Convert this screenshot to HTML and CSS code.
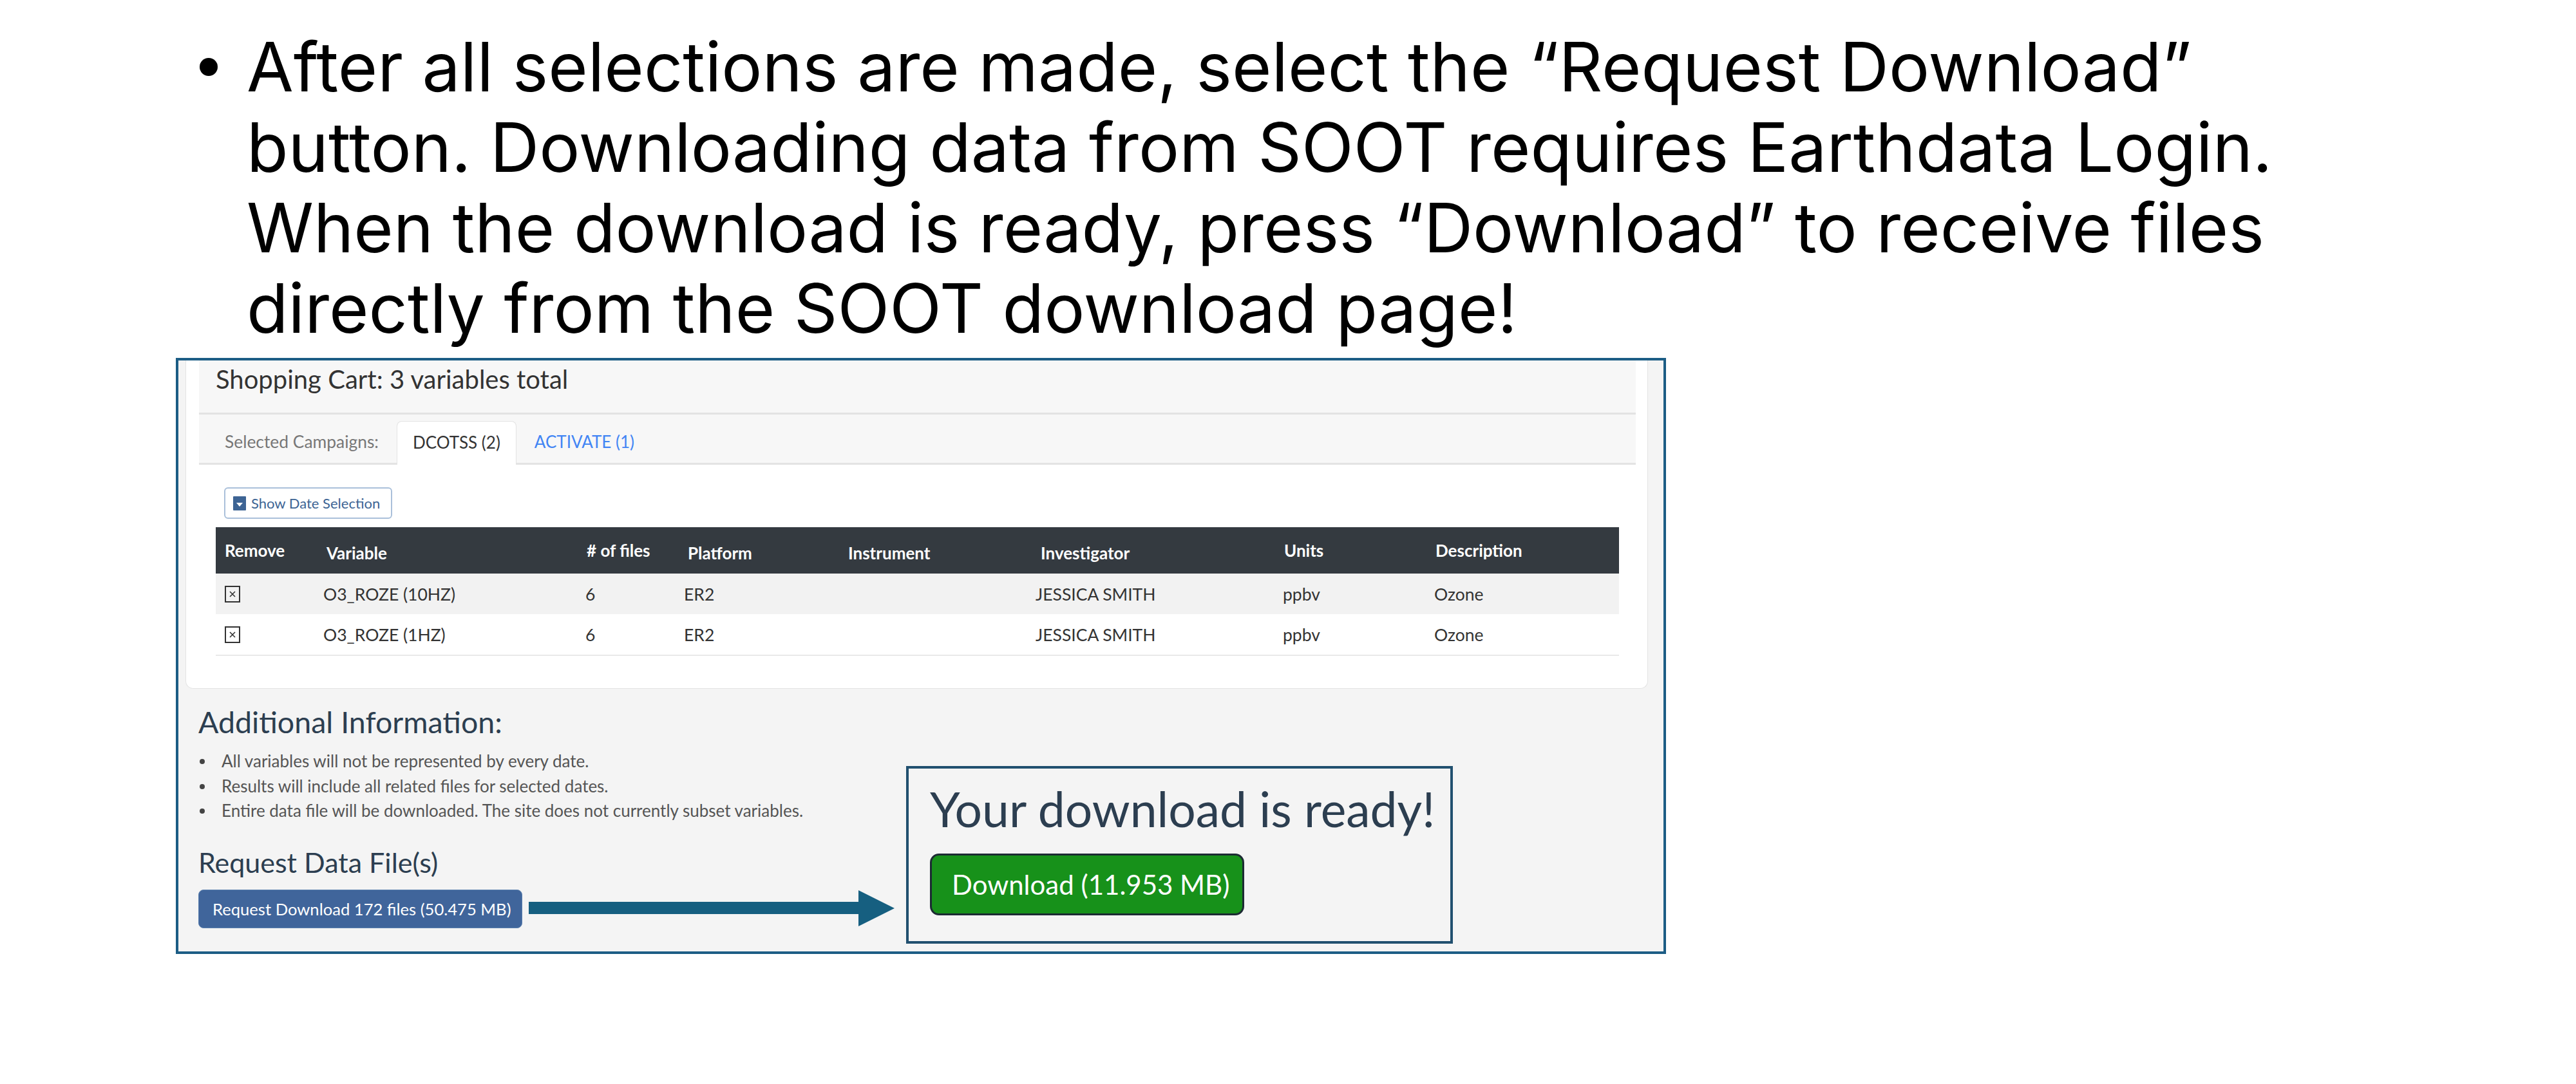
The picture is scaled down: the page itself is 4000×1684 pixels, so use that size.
FILE: index.html
```html
<!DOCTYPE html>
<html lang="en">
<head>
<meta charset="utf-8">
<title>SOOT download</title>
<link rel="stylesheet" href="styles.css">
</head>
<body>
<div class="slide">
  <div class="point">
    <span class="dot"></span>
    <p class="point-text">After all selections are made, select the “Request Download”<br>button. Downloading data from SOOT requires Earthdata Login.<br>When the download is ready, press “Download” to receive files<br>directly from the SOOT download page!</p>
  </div>

  <div class="shot">
    <div class="card">
      <div class="card-head">Shopping Cart: 3 variables total</div>
      <div class="tabs">
        <span class="tab-label">Selected Campaigns:</span>
        <span class="tab active">DCOTSS (2)</span>
        <span class="tab link">ACTIVATE (1)</span>
      </div>
      <div class="card-body">
        <button class="date-btn" type="button">
          <svg class="date-ico" width="20" height="22" viewBox="0 0 20 22"><rect x="0" y="0" width="20" height="22" rx="1" fill="#3d6494"/><polygon points="5,10 15,10 10,16" fill="#fff"/></svg>
          <span>Show Date Selection</span>
        </button>
        <table class="vars">
          <colgroup>
            <col class="c1"><col class="c2"><col class="c3"><col class="c4"><col class="c5"><col class="c6"><col class="c7"><col class="c8">
          </colgroup>
          <thead>
            <tr>
              <th>Remove</th><th class="lo">Variable</th><th># of files</th><th class="lo">Platform</th><th class="lo">Instrument</th><th class="lo">Investigator</th><th>Units</th><th>Description</th>
            </tr>
          </thead>
          <tbody>
            <tr class="odd">
              <td><svg class="rm" width="24" height="26" viewBox="0 0 24 26"><rect x="1" y="1" width="22" height="24" fill="none" stroke="#333" stroke-width="2"/><path d="M8 9 L16 17 M16 9 L8 17" stroke="#333" stroke-width="1.6"/></svg></td>
              <td>O3_ROZE (10HZ)</td><td>6</td><td>ER2</td><td></td><td>JESSICA SMITH</td><td>ppbv</td><td>Ozone</td>
            </tr>
            <tr class="even">
              <td><svg class="rm" width="24" height="26" viewBox="0 0 24 26"><rect x="1" y="1" width="22" height="24" fill="none" stroke="#333" stroke-width="2"/><path d="M8 9 L16 17 M16 9 L8 17" stroke="#333" stroke-width="1.6"/></svg></td>
              <td>O3_ROZE (1HZ)</td><td>6</td><td>ER2</td><td></td><td>JESSICA SMITH</td><td>ppbv</td><td>Ozone</td>
            </tr>
          </tbody>
        </table>
      </div>
    </div>

    <div class="lower">
      <div class="info">
        <h2 class="info-title">Additional Information:</h2>
        <ul class="info-list">
          <li>All variables will not be represented by every date.</li>
          <li>Results will include all related files for selected dates.</li>
          <li>Entire data file will be downloaded. The site does not currently subset variables.</li>
        </ul>
        <h3 class="req-title">Request Data File(s)</h3>
        <div class="req-row">
          <button class="req-btn" type="button">Request Download 172 files (50.475 MB)</button>
          <svg class="arrow" width="568" height="56" viewBox="0 0 568 56"><rect x="0" y="18" width="514" height="19" fill="#165f80"/><polygon points="512,0 568,28 512,56" fill="#165f80"/></svg>
        </div>
      </div>
      <div class="ready">
        <h1 class="ready-title">Your download is ready!</h1>
        <button class="dl-btn" type="button">Download (11.953 MB)</button>
      </div>
    </div>
  </div>
</div>
</body>
</html>
```

FILE: styles.css
```css
* { box-sizing: border-box; }
html, body { margin: 0; padding: 0; background: #ffffff; }

.slide {
  width: 4000px;
  height: 1684px;
  overflow: hidden;
  background: #ffffff;
}

/* ---------- slide bullet text ---------- */
.point {
  display: flex;
  align-items: flex-start;
  padding-top: 41px;
  padding-left: 310px;
  height: 556px;
}
.dot {
  flex: none;
  width: 28px;
  height: 28px;
  border-radius: 50%;
  background: #000;
  margin-top: 49px;
}
.point-text {
  margin: 0 0 0 45px;
  font-family: "Inter", "Noto Sans", sans-serif;
  font-size: 105.5px;
  line-height: 125px;
  color: #000;
  white-space: nowrap;
}

/* ---------- screenshot box ---------- */
.shot {
  margin-left: 273px;
  width: 2314px;
  height: 926px;
  border: 4px solid #1c5d85;
  background: #f4f4f4;
  overflow: hidden;
  font-family: "Lato", "Open Sans", sans-serif;
}

.card {
  margin-left: 11px;
  width: 2271px;
  background: #ffffff;
  border: 1px solid #e4e4e4;
  border-top: none;
  border-radius: 0 0 12px 12px;
  padding: 0 18px 50px 20px;
}

.card-head {
  height: 84px;
  background: #f7f7f7;
  border-bottom: 3px solid #e3e3e3;
  padding: 5px 0 0 26px;
  font-size: 40px;
  line-height: 48px;
  color: #333;
}

.tabs {
  display: flex;
  align-items: flex-start;
  height: 78px;
  background: #f7f7f7;
  border-bottom: 3px solid #e3e3e3;
  padding-left: 40px;
  font-size: 26.4px;
}
.tab-label,
.tab {
  margin-top: 10px;
  height: 65px;
  line-height: 65px;
  white-space: nowrap;
}
.tab-label { color: #777; margin-right: 28px; }
.tab.active {
  height: 68px;
  background: #fff;
  border: 1px solid #e3e3e3;
  border-bottom: none;
  border-radius: 8px 8px 0 0;
  padding: 0 24px;
  font-size: 26px;
  color: #333;
}
.tab.link { color: #4285f4; margin-left: 28px; font-size: 26px; }

.card-body { padding: 35px 0 0 0; }

.date-btn {
  display: flex;
  align-items: center;
  gap: 8px;
  margin-left: 39px;
  width: 261px;
  height: 49px;
  padding: 0 0 0 12px;
  background: #fff;
  border: 2px solid #aac0da;
  border-radius: 6px;
  font-family: "Lato", "Open Sans", sans-serif;
  font-size: 22px;
  color: #3d6494;
}
.date-ico { flex: none; }

.vars {
  margin: 13px 0 0 26px;
  width: 2179px;
  table-layout: fixed;
  border-collapse: collapse;
}
.c1 { width: 160px; }
.c2 { width: 402px; }
.c3 { width: 159px; }
.c4 { width: 249px; }
.c5 { width: 299px; }
.c6 { width: 376px; }
.c7 { width: 235px; }
.c8 { width: 299px; }

.vars th {
  height: 72px;
  background: #343a40;
  color: #fff;
  font-weight: 700;
  font-size: 26px;
  text-align: left;
  padding: 0 0 0 14px;
  vertical-align: middle;
  white-space: nowrap;
}
.vars th.lo { padding-top: 8px; padding-left: 12px; }

.vars td {
  font-size: 26.5px;
  color: #333;
  padding: 0 0 0 12px;
  vertical-align: middle;
  white-space: nowrap;
}
.vars td:first-child { padding-left: 14px; }
.vars td:nth-child(2) { padding-left: 7px; }
.vars td:nth-child(4) { padding-left: 6px; }
.vars td:nth-child(6) { padding-left: 4px; }
.vars tr.odd td { height: 63px; background: #f2f2f2; }
.vars tr.even td { height: 64px; background: #fff; border-bottom: 2px solid #e9e9e9; }
.rm { display: block; }

/* ---------- lower section ---------- */
.lower {
  display: flex;
  align-items: flex-start;
  padding-left: 31px;
}
.info {
  flex: none;
  width: 1081px;
  padding-top: 21px;
}
.info-title {
  margin: 0;
  font-size: 46.5px;
  font-weight: 400;
  line-height: 60px;
  color: #2c3e50;
  white-space: nowrap;
}
.info-list {
  margin: 12px 0 0 0;
  padding: 0;
  list-style: none;
}
.info-list li {
  position: relative;
  padding-left: 36px;
  font-size: 26px;
  line-height: 38.5px;
  color: #555;
  white-space: nowrap;
}
.info-list li::before {
  content: "";
  position: absolute;
  left: 2px;
  top: 16px;
  width: 8px;
  height: 8px;
  border-radius: 50%;
  background: #444;
}
.req-title {
  margin: 33px 0 0 0;
  font-size: 43px;
  font-weight: 400;
  line-height: 56px;
  color: #2c3e50;
  white-space: nowrap;
}
.req-row {
  display: flex;
  align-items: flex-start;
  margin-top: 14px;
}
.req-btn {
  flex: none;
  width: 503px;
  height: 60px;
  padding: 0 0 0 21px;
  text-align: left;
  background: #40659b;
  border: 1px solid #5a7fae;
  border-radius: 8px;
  color: #fff;
  font-family: "Lato", "Open Sans", sans-serif;
  font-size: 25.6px;
  white-space: nowrap;
}
.arrow { flex: none; margin: 1px 0 0 10px; }

.ready {
  flex: none;
  margin: 120px 0 0 18px;
  width: 849px;
  height: 276px;
  border: 4px solid #21506f;
  padding: 17px 0 0 33px;
}
.ready-title {
  margin: 0;
  font-size: 75px;
  font-weight: 400;
  line-height: 90px;
  color: #2c3e50;
  white-space: nowrap;
}
.dl-btn {
  display: block;
  margin-top: 25px;
  width: 488px;
  height: 96px;
  padding: 0 0 0 31px;
  text-align: left;
  background: #17911a;
  border: 3px solid #1c2b33;
  border-radius: 14px;
  color: #fff;
  font-family: "Lato", "Open Sans", sans-serif;
  font-size: 42px;
  white-space: nowrap;
}
```
